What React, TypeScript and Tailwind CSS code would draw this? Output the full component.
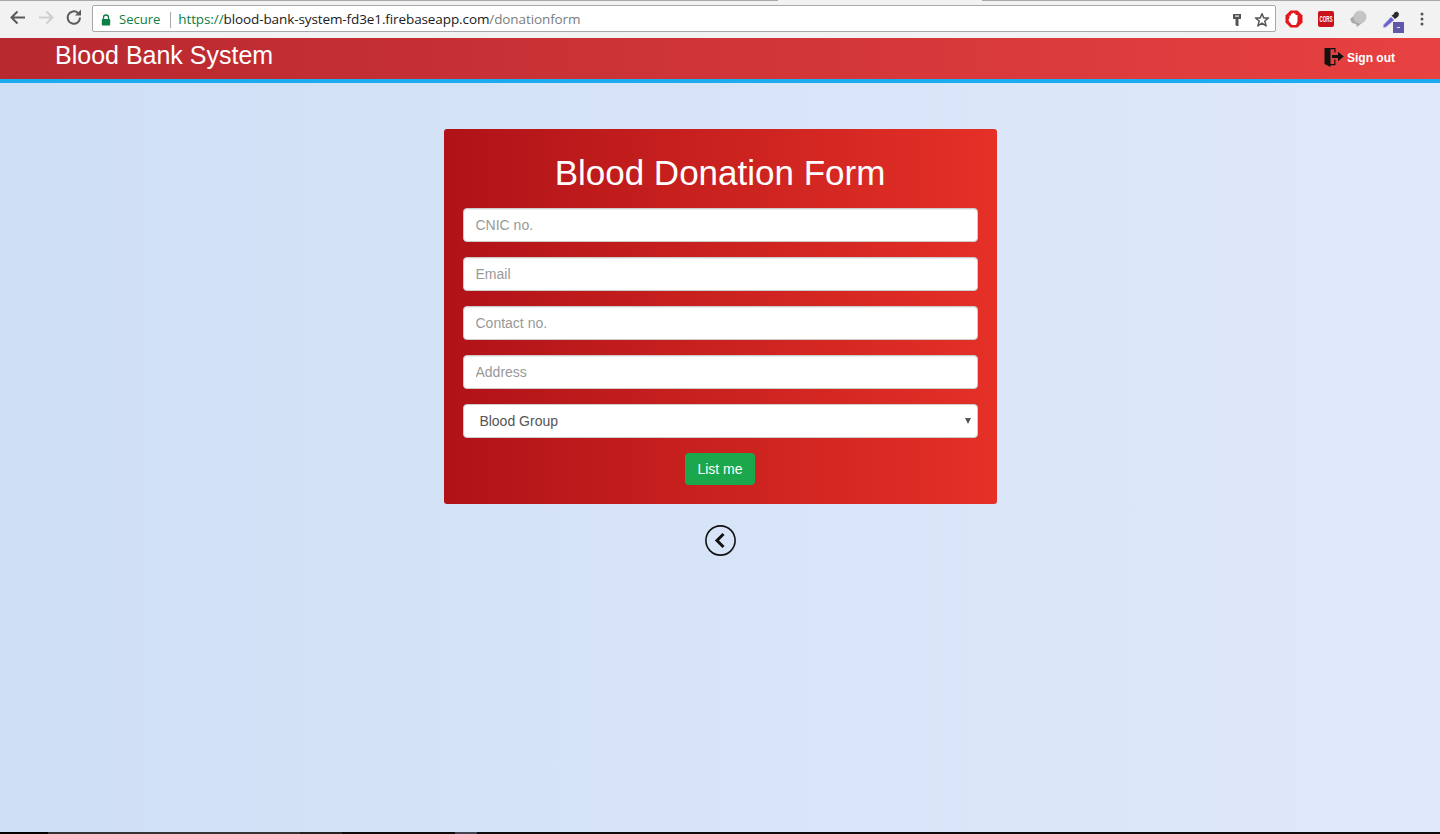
import React from "react";

const sans = "font-['Liberation_Sans',Arial,sans-serif]";

function Toolbar() {
  return (
    <div className="h-[38px] shrink-0 bg-[#f2f2f2] flex flex-col">
      <div className="h-px flex-none flex">
        <div className="w-[778px] bg-[#a8a8a8]" />
        <div className="w-[204px]" />
        <div className="flex-1 bg-[#a8a8a8]" />
      </div>
      <div className="flex-1 flex items-start pt-[4px]">
        <div className="w-[92px] h-[26px] flex-none flex items-center">
          <svg width="92" height="26" viewBox="0 0 92 26" fill="none">
            <path d="M25 12.500H11.500M17.500 6.500L11.500 12.500L17.500 18.500" stroke="#5a5a5a" strokeWidth="2" />
            <path d="M39 12.500H52M46.500 6.500L52.500 12.500L46.500 18.500" stroke="#cfcfcf" strokeWidth="2" />
            <path d="M80 12.500A6.200 6.200 0 1 1 78 8" stroke="#5a5a5a" strokeWidth="2" />
            <path d="M75 10.500H81V4.500Z" fill="#5a5a5a" />
          </svg>
        </div>
        <div className="w-[1184px] h-[27px] flex-none bg-white border border-[#a9a9a9] rounded-[2px] box-border pt-[2px] flex items-center font-['Open_Sans',sans-serif] text-[13px]">
          <svg className="ml-[8px] flex-none" width="10" height="12" viewBox="0 0 10 12">
            <path d="M2.500 5V3.500a2.500 2.500 0 0 1 5 0V5" fill="none" stroke="#0b8043" strokeWidth="1.300" />
            <rect x="0.800" y="5" width="8.400" height="6.500" rx="0.800" fill="#0b8043" />
          </svg>
          <span className="ml-[8px] text-[#0b8043]">Secure</span>
          <span className="ml-[10px] w-px h-[16px] bg-[#a9a9a9]" />
          <span className="ml-[7px] whitespace-nowrap text-[13.5px] tracking-[-0.1px]">
            <span className="text-[#0b8043]">https://</span>
            <span className="text-[#202020]">blood-bank-system-fd3e1.firebaseapp.com</span>
            <span className="text-[#7c7c7c]">/donationform</span>
          </span>
          <div className="ml-auto flex items-center">
            <svg width="12" height="14" viewBox="0 0 12 14">
              <path d="M2 1H10V6H7.500V13H5.500L4.500 12V6H2Z" fill="#555" />
              <rect x="4" y="2.500" width="4" height="1.200" fill="#eee" />
            </svg>
            <svg className="ml-[11px] mr-[5px]" width="16" height="16" viewBox="0 0 16 16">
              <path d="M8 1.800L9.800 6H14.500L10.800 9L12.100 14L8 11.200L3.900 14L5.200 9L1.500 6H6.200Z" fill="none" stroke="#555" strokeWidth="1.500" strokeLinejoin="round" />
            </svg>
          </div>
        </div>
        <div className="flex-1 h-[28px] flex items-center pl-[9px]">
          <svg className="flex-none" width="18" height="18" viewBox="0 0 18 18">
            <path d="M5.500 0.500H12.500L17.500 5.500V12.500L12.500 17.500H5.500L0.500 12.500V5.500Z" fill="#e3161c" />
            <path d="M4.500 8.500V5.500H6V8V3.800H7.500V8V2.800H9V8V3.500H10.500V8.500V5H12.500V11.500L11 15H7L4 11.500L3.500 9Z" fill="#fff" />
          </svg>
          <div className="ml-[15px] w-[16px] h-[16px] flex-none rounded-[2px] bg-[#c9121a] flex items-center justify-center overflow-hidden">
            <span className="flex-none whitespace-nowrap font-['Liberation_Sans',sans-serif] font-bold text-[9px] leading-none text-white scale-x-50">CORS</span>
          </div>
          <svg className="ml-[14px] flex-none" width="20" height="18" viewBox="0 0 20 18">
            <path d="M2 9L7 5L13 8L14 13L9 17L8 14L4 13Z" fill="#a9a9a9" />
            <circle cx="12" cy="7" r="6.500" fill="#c4c4c4" />
            <path d="M8 3.500A5 4 0 0 1 15.500 3A6 6 0 0 0 8 3.500Z" fill="#e6e6e6" />
          </svg>
          <svg className="ml-[14px] flex-none" width="22" height="28" viewBox="0 0 22 28">
            <path d="M1.500 20L9 12L12 15L4 22L1.500 22.500Z" fill="#6a5fd0" stroke="#b5b0d8" strokeWidth="0.800" />
            <path d="M9.500 10.500L13 14L15 12.500L16.500 11L17 8.500L15 6.500L12.500 7.500L11.500 9.500Z" fill="#2b2b2b" />
            <rect x="11" y="17" width="11" height="11" fill="#6058a8" />
            <rect x="15" y="22" width="3" height="1" fill="#e0e0f0" />
          </svg>
          <svg className="ml-[16px] flex-none" width="4" height="14" viewBox="0 0 4 14" fill="#555">
            <circle cx="2" cy="2" r="1.500" />
            <circle cx="2" cy="7" r="1.500" />
            <circle cx="2" cy="12" r="1.500" />
          </svg>
        </div>
      </div>
    </div>
  );
}

function Header() {
  return (
    <header className={`h-[45px] shrink-0 box-border border-b-4 border-[#1bacf0] bg-gradient-to-r from-[#b7282f] to-[#e84141] flex items-center pl-[55px] pr-[45px] text-white ${sans}`}>
      <span className="text-[25px] leading-none relative -top-[3px]">Blood Bank System</span>
      <div className="ml-auto flex items-center relative -top-[1px]">
        <svg width="20" height="21" viewBox="0 0 20 21">
          <path d="M0.500 1.500H6.500V20L0.500 17Z" fill="#111" />
          <path d="M0.500 1H11.500V5.500H10.300V2.200H5V17H10.300V12.500H11.500V18.200H5V16.500" fill="#111" />
          <path d="M8 8H14V4.800L19.800 9.500L14 14.200V11H8Z" fill="#111" />
        </svg>
        <span className="ml-[3px] text-[12px] font-bold">Sign out</span>
      </div>
    </header>
  );
}

function Field({ placeholder }: { placeholder: string }) {
  return (
    <input
      placeholder={placeholder}
      className="block w-full h-[34px] px-3 text-[14px] text-[#555] bg-white border border-[#ccc] rounded-[4px] shadow-[inset_0_1px_1px_rgba(0,0,0,0.075)] placeholder:text-[#999] outline-none"
    />
  );
}

export default function App() {
  return (
    <div className={`h-[834px] w-[1440px] overflow-hidden flex flex-col ${sans}`}>
      <Toolbar />
      <Header />
      <main className="flex-1 bg-gradient-to-r from-[#cfdff5] to-[#e0e9fb] flex flex-col items-center pt-[46px]">
        <form className="w-[553px] h-[375px] rounded-[3px] bg-gradient-to-r from-[#b01218] to-[#e53027] px-[19px] flex flex-col">
          <h1 className="text-[35px] leading-[40px] text-white text-center mt-[24px] mb-[15px]">Blood Donation Form</h1>
          <div className="flex flex-col gap-[15px]">
            <Field placeholder="CNIC no." />
            <Field placeholder="Email" />
            <Field placeholder="Contact no." />
            <Field placeholder="Address" />
            <div className="relative">
              <select className="block w-full h-[34px] pl-[12px] pr-6 text-[14px] text-[#555] bg-white border border-[#ccc] rounded-[4px] appearance-none outline-none">
                <option>&nbsp;Blood Group</option>
              </select>
              <svg className="absolute right-[7px] top-[14px]" width="6" height="6" viewBox="0 0 6 6">
                <path d="M0 0H6L3 6Z" fill="#555" />
              </svg>
            </div>
          </div>
          <button type="button" className="self-center mt-[15px] w-[70px] h-[32px] rounded-[4px] bg-[#1ba74c] text-white text-[14px]">List me</button>
        </form>
        <svg className="mt-[21px]" width="31" height="31" viewBox="0 0 31 31" fill="none">
          <circle cx="15.500" cy="15.500" r="14.600" stroke="#111" strokeWidth="1.600" />
          <path d="M18.500 9L12 15.500L18.500 22" stroke="#111" strokeWidth="3" />
        </svg>
      </main>
      <div className="h-[2px] shrink-0 flex bg-[#0c0c0c]">
        <div className="w-[48px] bg-black" />
        <div className="w-[252px] bg-[#333]" />
        <div className="w-[42px] bg-[#222]" />
        <div className="w-[113px] bg-[#0c0c0c]" />
        <div className="w-[22px] bg-[#445]" />
      </div>
    </div>
  );
}
